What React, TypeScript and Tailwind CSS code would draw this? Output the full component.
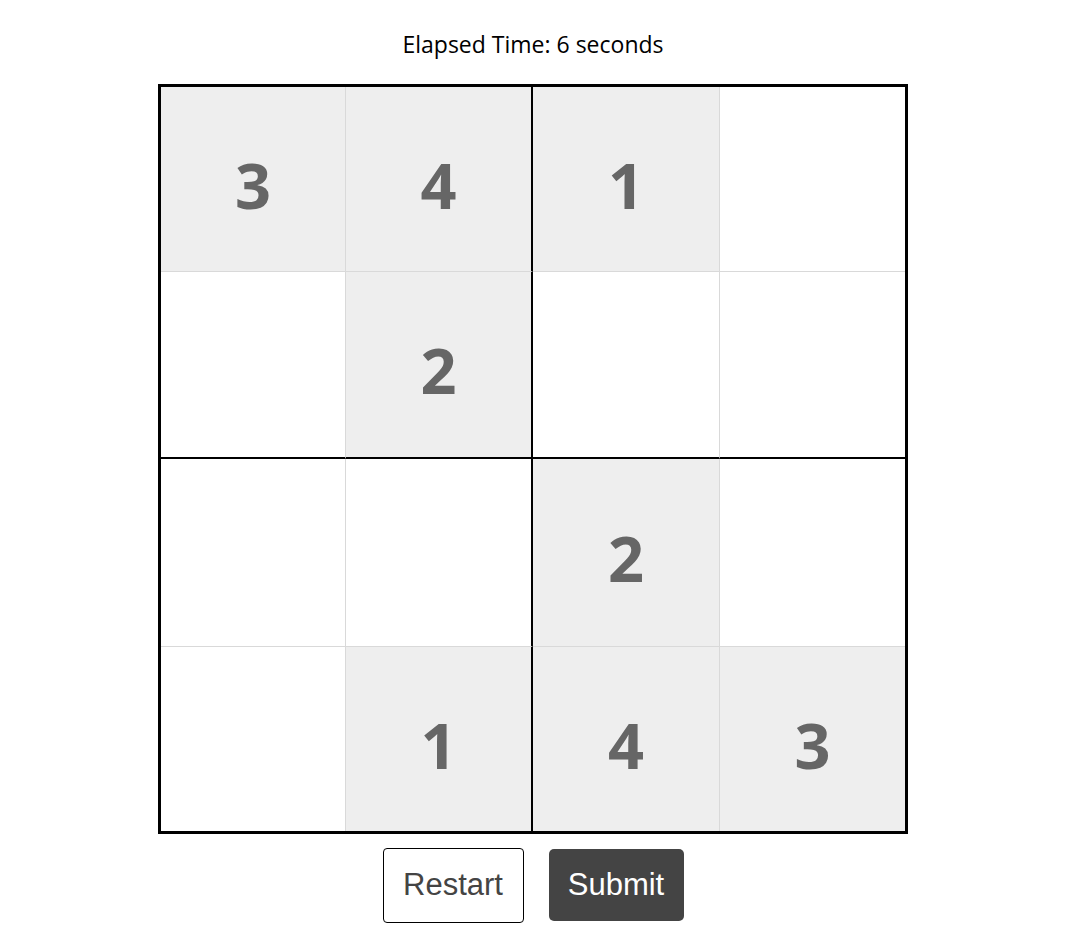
import React from "react";

const grid: (number | null)[][] = [
  [3, 4, 1, null],
  [null, 2, null, null],
  [null, null, 2, null],
  [null, 1, 4, 3],
];

const rowH = ["h-[185px]", "h-[187px]", "h-[188px]", "h-[184px]"];

function cellClass(r: number, c: number) {
  const parts: string[] = ["flex items-center justify-center", rowH[r]];
  if (c === 1) parts.push("border-r-2 border-r-black");
  else if (c !== 3) parts.push("border-r border-r-[#d9d9d9]");
  if (r === 1) parts.push("border-b-2 border-b-black");
  else if (r !== 3) parts.push("border-b border-b-[#d9d9d9]");
  return parts.join(" ");
}

export default function App() {
  return (
    <div className="w-[1066px] flex flex-col items-center bg-white" style={{ fontFamily: '"Open Sans", "Noto Sans", sans-serif' }}>
      <div className="pt-[28px] h-[84px] text-[23px] leading-[32px] text-black">Elapsed Time: 6 seconds</div>
      <div className="border-[3px] border-black grid grid-cols-[185px_187px_187px_185px]">
        {grid.map((row, r) =>
          row.map((v, c) => (
            <div key={`${r}-${c}`} className={`${cellClass(r, c)} ${v !== null ? "bg-[#eeeeee]" : "bg-white"}`}>
              {v !== null && (
                <span className="text-[63px] font-bold text-[#666666] leading-none pt-[10px]">{v}</span>
              )}
            </div>
          ))
        )}
      </div>
      <div className="flex gap-[25px] mt-[14px]" style={{ fontFamily: '"Liberation Sans", Arial, sans-serif' }}>
        <button className="w-[141px] h-[75px] border-[1.5px] border-black rounded-[4px] bg-white text-[#444444] text-[31px]">Restart</button>
        <button className="w-[135px] h-[72px] mt-[1px] rounded-[5px] bg-[#444444] text-white text-[31px]">Submit</button>
      </div>
    </div>
  );
}
